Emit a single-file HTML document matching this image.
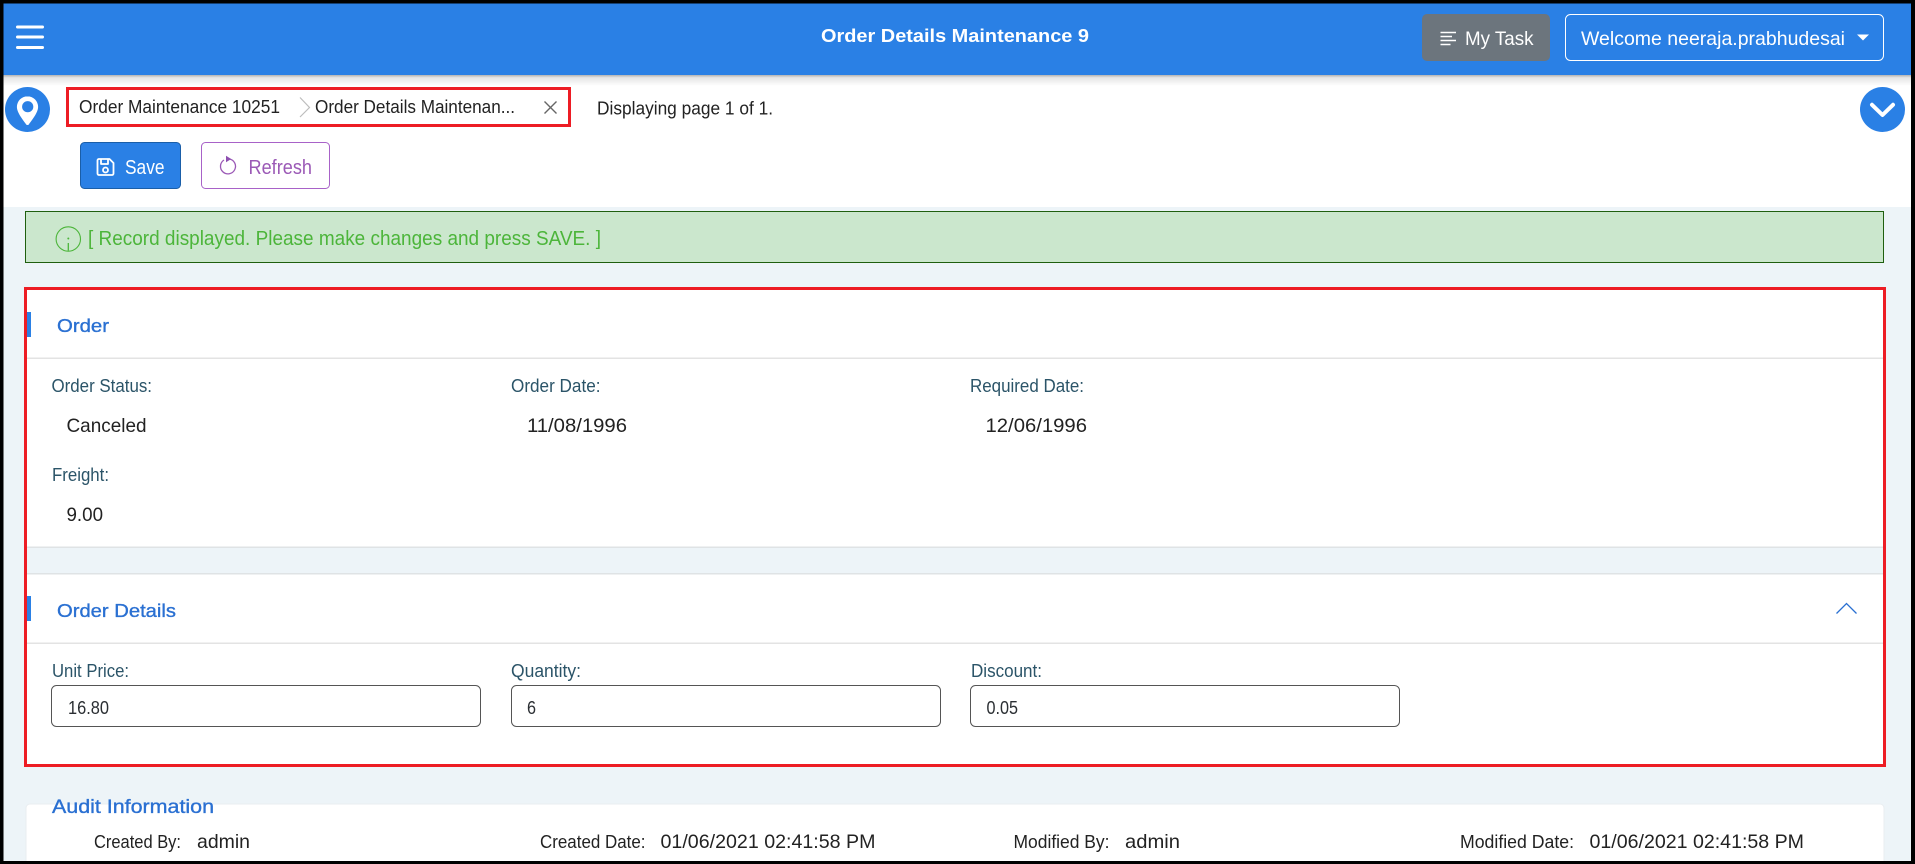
<!DOCTYPE html>
<html lang="en">
<head>
<meta charset="utf-8">
<title>Order Details Maintenance 9</title>
<style>
html,body{margin:0;padding:0;width:1915px;height:864px;overflow:hidden;background:#edf4f8}
svg{display:block;position:absolute;left:0;top:0}
text{font-family:"Liberation Sans",Arial,sans-serif;font-size:18px}
.l{fill:#2b5468}
.v{fill:#222;font-size:19.5px}
.d{fill:#2b2f33;font-size:18px}
.h{fill:#2a70d2;font-size:18.5px;stroke:#2a70d2;stroke-width:.35}
</style>
</head>
<body>
<svg width="1915" height="864" viewBox="0 0 1915 864" xmlns="http://www.w3.org/2000/svg">
<defs>
<linearGradient id="sh" x1="0" y1="0" x2="0" y2="1"><stop offset="0" stop-color="#000" stop-opacity=".3"/><stop offset=".25" stop-color="#000" stop-opacity=".1"/><stop offset="1" stop-color="#000" stop-opacity="0"/></linearGradient>
</defs>
<!-- page -->
<rect width="1915" height="864" fill="#edf4f8"/>
<rect x="0" y="75" width="1915" height="132" fill="#fff"/>
<rect x="0" y="75" width="1915" height="11" fill="url(#sh)"/>
<!-- header -->
<rect x="0" y="0" width="1915" height="75" fill="#2a80e5"/>
<g fill="#fff">
<rect x="16" y="25.500" width="28" height="3" rx="1.500"/>
<rect x="16" y="35.500" width="28" height="3" rx="1.500"/>
<rect x="16" y="46" width="28" height="3" rx="1.500"/>
</g>
<text x="821" y="42" textLength="268" lengthAdjust="spacingAndGlyphs" fill="#fff" font-weight="bold" style="font-size:18.500px">Order Details Maintenance 9</text>
<rect x="1422" y="14" width="128" height="47" rx="5" fill="#6c757d"/>
<g stroke="#fff" stroke-width="1.400">
<path d="M1440.500 32.500H1456M1440.500 36.500H1452M1440.500 40.500H1456M1440.500 44.500H1450.500"/>
</g>
<text x="1465" y="45" textLength="68.500" lengthAdjust="spacingAndGlyphs" fill="#fff" style="font-size:19.500px">My Task</text>
<rect x="1565.500" y="14.500" width="318" height="46" rx="5" fill="none" stroke="#fff" stroke-width="1"/>
<text x="1581" y="45" textLength="264" lengthAdjust="spacingAndGlyphs" fill="#fff" style="font-size:19.500px">Welcome neeraja.prabhudesai</text>
<path d="M1857 34.500H1869L1863 40.500Z" fill="#fff"/>

<!-- pin -->
<circle cx="27.500" cy="109.500" r="22.500" fill="#2a80e5"/>
<path d="M27.500 96.300a10.600 10.600 0 0 0-10.600 10.600c0 6 6.600 13.600 9.100 17.300a1.800 1.800 0 0 0 3 0c2.500-3.700 9.100-11.300 9.100-17.300a10.600 10.600 0 0 0-10.600-10.600z" fill="#fff"/>
<circle cx="27.700" cy="106.700" r="5.600" fill="#2a80e5"/>

<!-- breadcrumb -->
<rect x="67.500" y="88.500" width="502" height="37" fill="#fff" stroke="#ed1c24" stroke-width="3"/>
<text x="79" y="113" textLength="201" lengthAdjust="spacingAndGlyphs" fill="#222">Order Maintenance 10251</text>
<path d="M300 97.500L309.500 107.500L300 117" fill="none" stroke="#bdbdbd" stroke-width="1.200"/>
<text x="315" y="113" textLength="200" lengthAdjust="spacingAndGlyphs" fill="#222">Order Details Maintenan...</text>
<path d="M544.500 101.500L556.500 113.500M556.500 101.500L544.500 113.500" fill="none" stroke="#666" stroke-width="1.400"/>
<text x="597" y="114.500" textLength="176" lengthAdjust="spacingAndGlyphs" fill="#222">Displaying page 1 of 1.</text>

<!-- right chevron -->
<circle cx="1882.500" cy="109.500" r="22.500" fill="#2a80e5"/>
<path d="M1872 104.800L1882.500 115L1893 104.800" fill="none" stroke="#fff" stroke-width="4" stroke-linecap="round" stroke-linejoin="round"/>

<!-- save -->
<rect x="80.500" y="142.500" width="100" height="46" rx="4" fill="#2a80e5" stroke="#1a5ea8"/>
<g fill="none" stroke="#fff" stroke-width="1.800" stroke-linejoin="round">
<path d="M99 159h10.500l4 4v10.500a1.500 1.500 0 0 1-1.500 1.500h-13a1.500 1.500 0 0 1-1.500-1.500v-13a1.500 1.500 0 0 1 1.500-1.500z"/>
<path d="M101 159.500v4.500h7v-4.500"/>
<circle cx="105.500" cy="170" r="2.500"/>
</g>
<text x="125" y="174" textLength="39.500" lengthAdjust="spacingAndGlyphs" fill="#fff" style="font-size:20px">Save</text>

<!-- refresh -->
<rect x="201.500" y="142.500" width="128" height="46" rx="4" fill="#fff" stroke="#a862c8"/>
<path d="M224 160a7.500 7.500 0 1 0 5.500-1" fill="none" stroke="#9b59b6" stroke-width="1.300"/>
<path d="M226 155.800L231.200 159L226 162.200Z" fill="#8e4fb0"/>
<text x="248.500" y="174" textLength="63.500" lengthAdjust="spacingAndGlyphs" fill="#9b59b6" style="font-size:20px">Refresh</text>

<!-- alert -->
<rect x="25.500" y="211.500" width="1858" height="51" fill="#cbe7cd" stroke="#1f5f0f"/>
<circle cx="68.300" cy="239" r="12.200" fill="none" stroke="#4cb53a" stroke-width="1.100"/>
<path d="M68.300 243V250.500" stroke="#4cb53a" stroke-width="1.300"/>
<circle cx="68.300" cy="238.500" r="1" fill="#4cb53a"/>
<text x="88" y="245" textLength="513" lengthAdjust="spacingAndGlyphs" fill="#4cb53a" style="font-size:20px">[ Record displayed. Please make changes and press SAVE. ]</text>

<!-- main panel -->
<rect x="25.500" y="288.500" width="1859" height="477" fill="#fff" stroke="#ed1c24" stroke-width="3"/>
<rect x="27" y="312" width="4" height="25" fill="#2a80e5"/>
<text class="h" x="57" y="332" textLength="52" lengthAdjust="spacingAndGlyphs">Order</text>
<rect x="27" y="357.500" width="1856" height="1.500" fill="#e3e3e3"/>

<text class="l" x="51.500" y="392" textLength="100.500" lengthAdjust="spacingAndGlyphs">Order Status:</text>
<text class="l" x="511" y="392" textLength="89.500" lengthAdjust="spacingAndGlyphs">Order Date:</text>
<text class="l" x="970" y="392" textLength="114" lengthAdjust="spacingAndGlyphs">Required Date:</text>
<text class="v" x="66.500" y="432" textLength="80" lengthAdjust="spacingAndGlyphs">Canceled</text>
<text class="v" x="527" y="432" textLength="100" lengthAdjust="spacingAndGlyphs">11/08/1996</text>
<text class="v" x="985.500" y="432" textLength="101.500" lengthAdjust="spacingAndGlyphs">12/06/1996</text>
<text class="l" x="52" y="481" textLength="57" lengthAdjust="spacingAndGlyphs">Freight:</text>
<text class="v" x="66.500" y="521" textLength="36.500" lengthAdjust="spacingAndGlyphs">9.00</text>

<rect x="27" y="547" width="1856" height="26.500" fill="#edf4f8"/>
<rect x="27" y="546.500" width="1856" height="1.500" fill="#dfe3e5"/>
<rect x="27" y="573" width="1856" height="1.500" fill="#dfe3e5"/>

<rect x="27" y="596" width="4" height="25" fill="#2a80e5"/>
<text class="h" x="57" y="617" textLength="119" lengthAdjust="spacingAndGlyphs">Order Details</text>
<path d="M1836.500 613.500L1846.500 603.500L1856.500 613.500" fill="none" stroke="#2a70d2" stroke-width="1.300"/>
<rect x="27" y="642.500" width="1856" height="1.500" fill="#e3e3e3"/>

<text class="l" x="52" y="677" textLength="77" lengthAdjust="spacingAndGlyphs">Unit Price:</text>
<text class="l" x="511" y="677" textLength="70" lengthAdjust="spacingAndGlyphs">Quantity:</text>
<text class="l" x="971" y="677" textLength="71" lengthAdjust="spacingAndGlyphs">Discount:</text>
<rect x="51.500" y="685.500" width="429" height="41" rx="5" fill="#fff" stroke="#555"/>
<rect x="511.500" y="685.500" width="429" height="41" rx="5" fill="#fff" stroke="#555"/>
<rect x="970.500" y="685.500" width="429" height="41" rx="5" fill="#fff" stroke="#555"/>
<text class="d" x="68" y="714" textLength="41" lengthAdjust="spacingAndGlyphs">16.80</text>
<text class="d" x="527" y="714" textLength="9" lengthAdjust="spacingAndGlyphs">6</text>
<text class="d" x="986.500" y="714" textLength="31.500" lengthAdjust="spacingAndGlyphs">0.05</text>

<!-- audit -->
<path d="M26 864V808a4 4 0 0 1 4-4H1880a4 4 0 0 1 4 4V864Z" fill="#fff" stroke="#e9eef1"/>
<text x="52" y="813" textLength="162" lengthAdjust="spacingAndGlyphs" fill="#2a70d2" stroke="#2a70d2" stroke-width=".35" style="font-size:19.500px">Audit Information</text>
<g fill="#222">
<text x="94" y="848" textLength="87" lengthAdjust="spacingAndGlyphs">Created By:</text>
<text x="197" y="848" textLength="53" lengthAdjust="spacingAndGlyphs" style="font-size:19.500px">admin</text>
<text x="540" y="848" textLength="105.500" lengthAdjust="spacingAndGlyphs">Created Date:</text>
<text x="660.500" y="848" textLength="215" lengthAdjust="spacingAndGlyphs" style="font-size:19.500px">01/06/2021 02:41:58 PM</text>
<text x="1013.500" y="848" textLength="96" lengthAdjust="spacingAndGlyphs">Modified By:</text>
<text x="1125" y="848" textLength="55" lengthAdjust="spacingAndGlyphs" style="font-size:19.500px">admin</text>
<text x="1460" y="848" textLength="114" lengthAdjust="spacingAndGlyphs">Modified Date:</text>
<text x="1589.500" y="848" textLength="214.500" lengthAdjust="spacingAndGlyphs" style="font-size:19.500px">01/06/2021 02:41:58 PM</text>
</g>

<!-- screenshot frame -->
<rect x="0" y="0" width="1915" height="3.500" fill="#000"/>
<rect x="0" y="861" width="1915" height="3" fill="#000"/>
<rect x="0" y="0" width="3.500" height="864" fill="#000"/>
<rect x="1911" y="0" width="4" height="864" fill="#000"/>
</svg>
</body>
</html>
